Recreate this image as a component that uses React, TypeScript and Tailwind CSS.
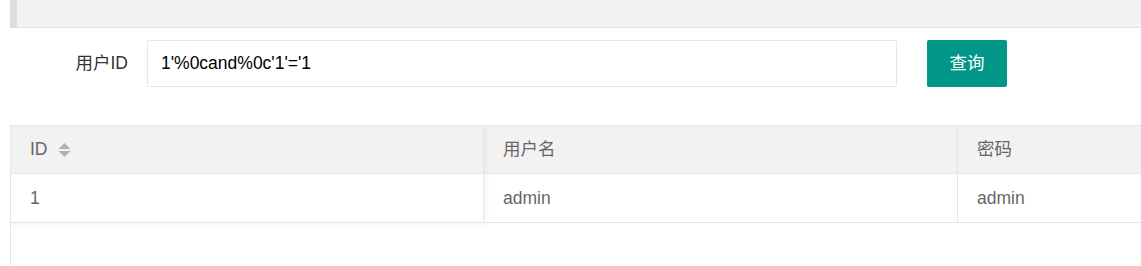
const font = "font-['Liberation_Sans','Noto_Sans_CJK_SC',sans-serif]";

function SortIcon() {
  return (
    <svg width="13" height="14" viewBox="0 0 13 14" className="ml-[10px]">
      <path d="M6.5 0 L12.5 6 L0.5 6 Z" fill="#b2b2b2" />
      <path d="M0.5 8 L12.5 8 L6.5 14 Z" fill="#b2b2b2" />
    </svg>
  );
}

export default function App() {
  const rows = [{ id: "1", username: "admin", password: "admin" }];

  return (
    <div className={`w-[1141px] h-[266px] overflow-hidden bg-white pl-[10px] ${font}`}>
      {/* search tip block */}
      <div className="w-[1160px] h-[28px] bg-[#f2f2f2] border-l-[7px] border-l-[#dddddd] border-b border-b-[#e3e3e3]" />

      {/* search form */}
      <div className="flex items-center mt-[12px] h-[47px]">
        <label className="w-[137px] pr-[19px] text-right text-[17.5px] text-[#333]">
          用户ID
        </label>
        <div className="w-[750px] h-[47px] border border-[#e6e6e6] rounded-[2px] flex items-center px-[13px] text-[17.5px] text-black">
          1'%0cand%0c'1'='1
        </div>
        <button className="ml-[30px] w-[80px] h-[47px] bg-[#009688] rounded-[2px] text-white text-[17.5px]">
          查询
        </button>
      </div>

      {/* table */}
      <div className="mt-[38px] w-[1422px] h-[200px] overflow-hidden border-l border-t border-[#e6e6e6] flex items-start text-[17.5px] text-[#666]">
        {/* fixed left column */}
        <div className="w-[473px] shrink-0 relative z-10 bg-white border-r border-[#e6e6e6] shadow-[0_0_8px_rgba(0,0,0,0.08)]">
          <div className="h-[48px] bg-[#f2f2f2] border-b border-[#e6e6e6] flex items-center px-[19px]">
            ID
            <SortIcon />
          </div>
          {rows.map((r) => (
            <div key={r.id} className="h-[49px] border-b border-[#e6e6e6] flex items-center px-[19px]">
              {r.id}
            </div>
          ))}
        </div>
        <div className="flex-1">
          <div className="h-[48px] bg-[#f2f2f2] border-b border-[#e6e6e6] flex">
            <div className="w-[474px] border-r border-[#e6e6e6] flex items-center px-[19px]">用户名</div>
            <div className="w-[474px] border-r border-[#e6e6e6] flex items-center px-[19px]">密码</div>
          </div>
          {rows.map((r) => (
            <div key={r.id} className="h-[49px] border-b border-[#e6e6e6] flex">
              <div className="w-[474px] border-r border-[#e6e6e6] flex items-center px-[19px]">{r.username}</div>
              <div className="w-[474px] border-r border-[#e6e6e6] flex items-center px-[19px]">{r.password}</div>
            </div>
          ))}
        </div>
      </div>
    </div>
  );
}
